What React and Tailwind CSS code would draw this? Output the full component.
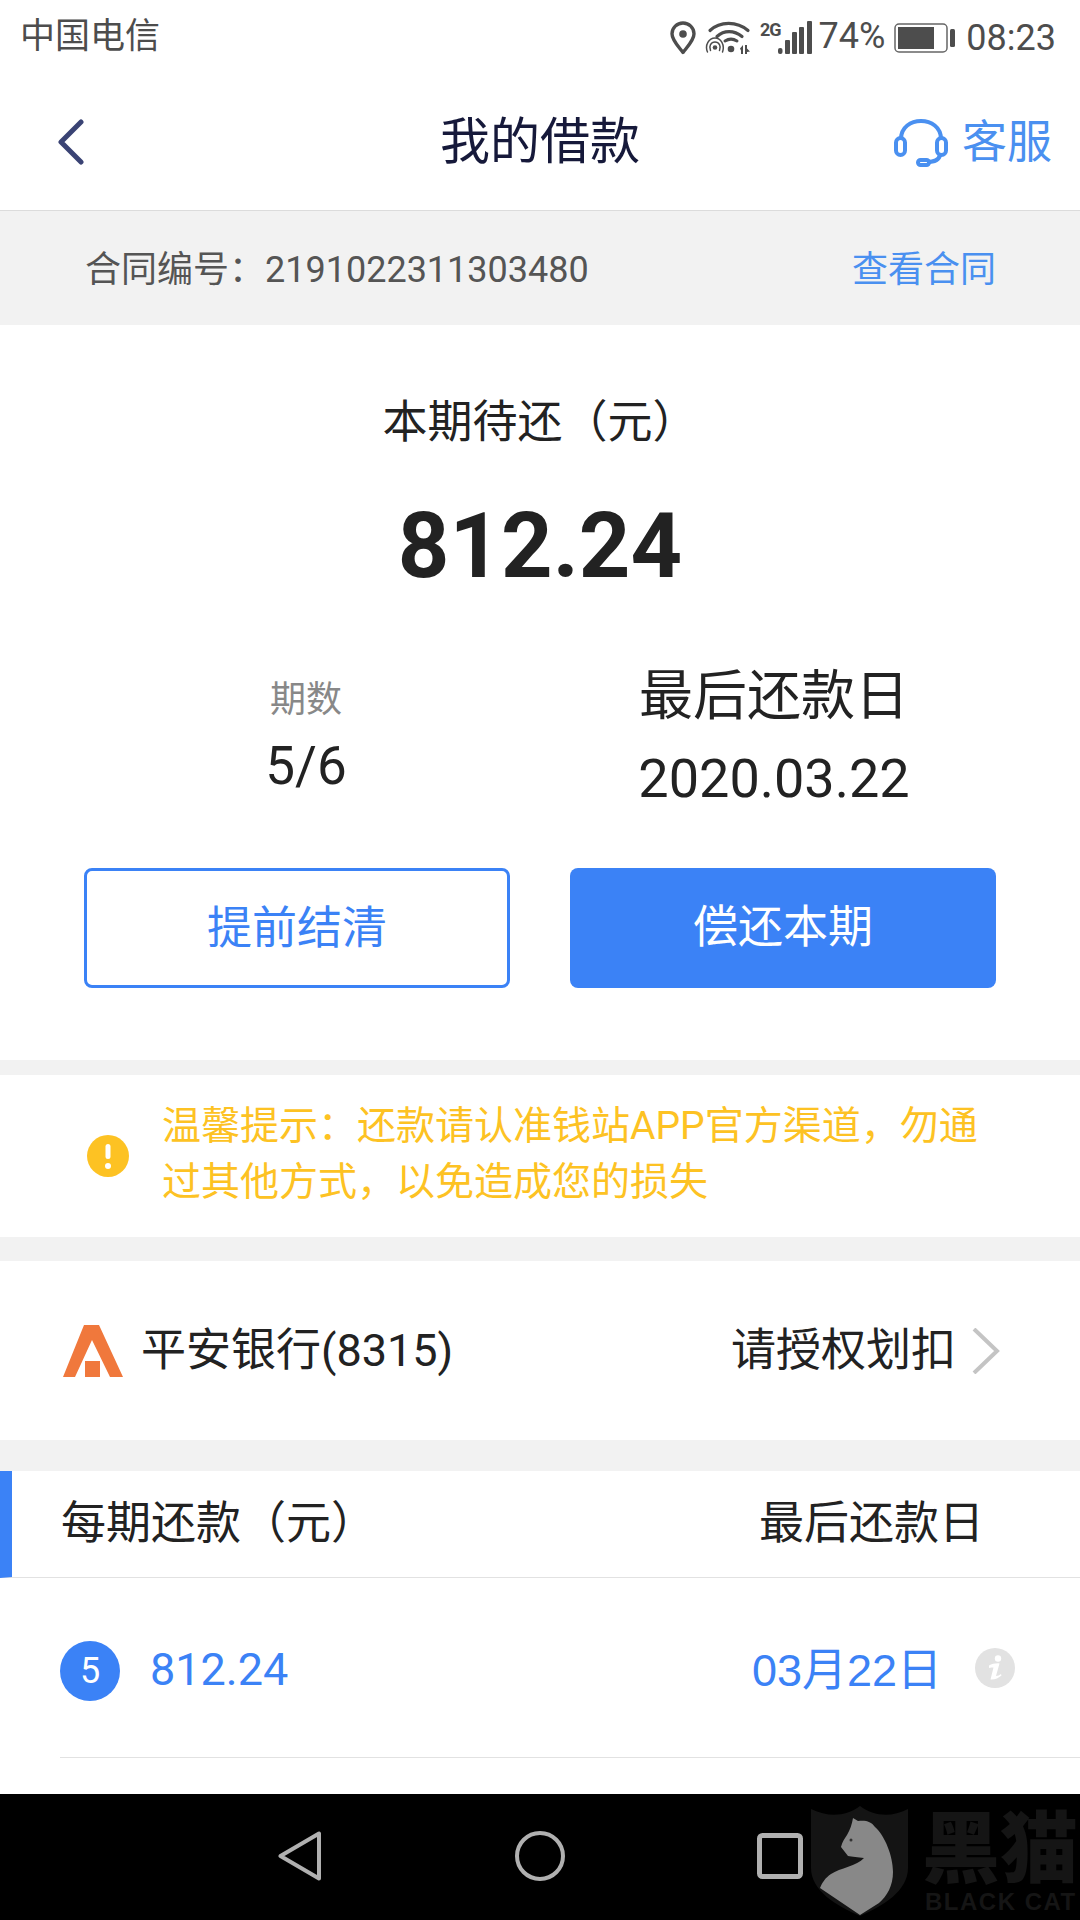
import React from "react"

const StatusIcons = () => (
  <>
    <svg width="26" height="34" viewBox="0 0 26 34">
      <path d="M13 2C7 2 2 6.800 2 12.800C2 19.500 9 26 13 31.500C17 26 24 19.500 24 12.800C24 6.800 19 2 13 2Z" fill="none" stroke="#4d4d4d" strokeWidth="3.400" strokeLinejoin="round" />
      <circle cx="13" cy="13" r="3.800" fill="#4d4d4d" />
    </svg>
    <svg width="46" height="34" viewBox="0 0 46 34" className="ml-[9px]">
      <g fill="none" stroke="#4d4d4d" strokeLinecap="round">
        <path d="M5 9.500C15 0 32 0 43 9.500" strokeWidth="3.200" />
        <path d="M12 15.500C19 9 29 9 37 15.500" strokeWidth="3.200" />
        <path d="M20 20C24 17.500 28 17.500 32 20" strokeWidth="3" />
        <path d="M2.500 31C-0.500 24 4 17 10 17C16 17 20 24 17.500 31" strokeWidth="1.500" />
        <path d="M5.500 29.500C3.500 25 6 21 10 21C14 21 16.500 25 14.500 29.500" strokeWidth="1.500" />
      </g>
      <circle cx="10" cy="26.500" r="2.300" fill="#4d4d4d" />
      <circle cx="26" cy="28" r="3.300" fill="#4d4d4d" />
      <path d="M35 27.500L38 24V33H36V29.500ZM40 24H42V27.500L45 30.500L42 31V33H40Z" fill="#4d4d4d" />
    </svg>
    <div className="ml-[9px] flex h-[34px] items-start">
      <span className="text-[18px] leading-[17px] font-bold tracking-[-1px] text-[#4d4d4d]">2G</span>
      <svg width="36" height="34" viewBox="0 0 36 34" className="ml-[-3px]">
        <g fill="#4d4d4d">
          <rect x="0" y="27" width="4.500" height="6" rx="2" />
          <rect x="7" y="19" width="5" height="14" rx="1" />
          <rect x="14" y="11" width="5" height="22" rx="1" />
          <rect x="21" y="6" width="5" height="27" rx="1" />
          <rect x="29" y="0" width="5" height="33" rx="1" />
        </g>
      </svg>
    </div>
    <span className="ml-[5px] mt-[-4px] text-[36px] leading-[40px]">74%</span>
    <svg width="62" height="30" viewBox="0 0 62 30" className="ml-[9px]">
      <rect x="1" y="1" width="52" height="28" rx="4" fill="none" stroke="#666666" strokeWidth="1.500" />
      <rect x="4" y="4" width="36" height="22" fill="#4d4d4d" />
      <rect x="56" y="6" width="5" height="18" rx="1.500" fill="#4d4d4d" />
    </svg>
  </>
)

const Headset = () => (
  <svg width="54" height="50" viewBox="0 0 54 50" fill="none" stroke="#4a90f0" strokeWidth="4">
    <path d="M7 21C7 -3 47 -3 47 21" />
    <rect x="2" y="20" width="9" height="17" rx="4.500" />
    <rect x="43" y="20" width="9" height="17" rx="4.500" />
    <path d="M46 37C45 42 40 44 33 44" />
    <rect x="24" y="42" width="11" height="5" rx="2.500" />
  </svg>
)

const BankLogo = () => (
  <svg width="60" height="52" viewBox="0 0 60 52">
    <path d="M21 0H36L60 52H47L29 15L12 52H0Z" fill="#f0783c" />
    <rect x="22" y="36" width="15" height="16" fill="#f0783c" />
  </svg>
)

const Watermark = () => (
  <div className="pointer-events-none absolute top-[12px] left-[811px] flex">
    <svg width="98" height="111" viewBox="0 0 98 111">
      <path d="M0 3C18 12 36 10 49 0C62 10 80 12 97 3V62C97 85 72 100 49 110C26 100 0 85 0 62Z" fill="#141414" />
      <path d="M42 12L47 15C54 14 60 15 64 21C74 30 82 50 82 66C82 80 76 90 68 97L49 109L9 82C11 77 14 72 20 68C29 62 46 60 53 52C47 51 41 51 37 50L30 41C31 36 34 32 36 29C39 24 41 18 42 12Z" fill="#888888" />
      <circle cx="40" cy="34" r="1.500" fill="#333333" />
    </svg>
    <div className="ml-[16px] flex w-[155px] flex-col">
      <span className="mt-[6px] ml-[-3px] text-[78px] leading-[78px] font-black whitespace-nowrap text-[#151515]">黑猫</span>
      <span className="font-['Liberation_Sans',sans-serif] text-[24px] leading-[24px] font-bold tracking-[1.500px] whitespace-nowrap text-[#151515]">BLACK CAT</span>
    </div>
  </div>
)

export default function App() {
  return (
    <div lang="zh-CN" className="flex h-[1920px] w-[1080px] flex-col overflow-hidden bg-[#f2f2f2] font-['Roboto','Noto_Sans_CJK_SC',sans-serif] text-[#222222]">
      {/* status bar */}
      <div className="flex h-[75px] items-center justify-between bg-white pr-[24px] pl-[20px] text-[#4d4d4d]">
        <span className="text-[35px]">中国电信</span>
        <div className="flex items-center">
          <StatusIcons />
          <span className="ml-[10px] text-[36px] leading-[40px]">08:23</span>
        </div>
      </div>

      {/* nav */}
      <div className="grid h-[136px] grid-cols-3 items-center border-b border-[#dcdcdc] bg-white px-[28px]">
        <svg width="28" height="46" viewBox="0 0 28 46" fill="none" stroke="#3a4374" strokeWidth="5" strokeLinecap="round" strokeLinejoin="round" className="ml-[29px] mt-[-2px]">
          <path d="M24 3L4 23L24 43" />
        </svg>
        <h1 className="text-center text-[50px] font-normal whitespace-nowrap text-[#16193a]">我的借款</h1>
        <div className="flex items-center justify-end gap-[14px] text-[45px] text-[#4a90f0]">
          <Headset />
          <span>客服</span>
        </div>
      </div>

      {/* contract */}
      <div className="flex h-[114px] items-center justify-between pt-[4px] pr-[84px] pl-[85px] text-[36px]">
        <span className="text-[#555555]">合同编号：2191022311303480</span>
        <span className="text-[#4a90f0]">查看合同</span>
      </div>

      {/* current period */}
      <div className="flex h-[735px] flex-col items-center bg-white pt-[68px]">
        <p className="text-[45px] leading-[60px]">本期待还（元）</p>
        <p className="mt-[44px] text-[90px] leading-[100px] font-bold">812.24</p>
        <div className="mt-[65px] grid w-[912px] grid-cols-2 gap-[24px] text-center">
          <div className="pt-[13px]">
            <p className="text-[36px] leading-[50px] text-[#888888]">期数</p>
            <p className="mt-[11px] text-[53px] leading-[60px]">5/6</p>
          </div>
          <div>
            <p className="text-[54px] leading-[70px]">最后还款日</p>
            <p className="mt-[12px] text-[54px] leading-[70px]">2020.03.22</p>
          </div>
        </div>
        <div className="mt-[54px] flex w-[912px] justify-between text-[45px]">
          <button className="h-[120px] w-[426px] rounded-[8px] border-[3px] border-[#3b82f6] pt-[2px] text-[#3b82f6]">提前结清</button>
          <button className="h-[120px] w-[426px] rounded-[8px] bg-[#3b82f6] text-white">偿还本期</button>
        </div>
      </div>

      {/* notice */}
      <div className="mt-[15px] flex h-[162px] items-center bg-white pl-[87px] text-[39px] leading-[56px] text-[#fdc223]">
        <svg width="42" height="42" viewBox="0 0 42 42" className="shrink-0">
          <circle cx="21" cy="21" r="21" fill="#fdc223" />
          <rect x="18.500" y="9" width="5" height="15" rx="2.500" fill="#ffffff" />
          <circle cx="21" cy="31" r="3" fill="#ffffff" />
        </svg>
        <p className="mt-[-4px] ml-[33px] w-[830px]">温馨提示：还款请认准钱站APP官方渠道，勿通过其他方式，以免造成您的损失</p>
      </div>

      {/* bank */}
      <div className="mt-[24px] flex h-[179px] items-center justify-between bg-white pr-[80px] pl-[63px] text-[45px]">
        <div className="flex items-center">
          <BankLogo />
          <span className="ml-[18px]">平安银行(8315)</span>
        </div>
        <div className="flex items-center">
          <span>请授权划扣</span>
          <svg width="28" height="46" viewBox="0 0 28 46" fill="none" stroke="#c4c4c4" strokeWidth="4" className="ml-[16px]">
            <path d="M2 1L25 23L2 45" />
          </svg>
        </div>
      </div>

      {/* plan */}
      <div className="mt-[31px] flex h-[107px] items-center justify-between border-b border-[#e2e2e2] border-l-[12px] border-l-[#3b82f6] bg-white pr-[96px] pl-[49px] text-[45px]">
        <span>每期还款（元）</span>
        <span>最后还款日</span>
      </div>
      <div className="flex-1 bg-white pl-[60px]">
        <div className="flex h-[180px] items-center justify-between border-b border-[#e2e2e2] pr-[65px] text-[#3b82f6]">
          <div className="mt-[6px] flex items-center text-[45px]">
            <span className="flex h-[60px] w-[60px] items-center justify-center rounded-full bg-[#3b82f6] text-[36px] text-white">5</span>
            <span className="mt-[-2px] ml-[30px]">812.24</span>
          </div>
          <div className="flex items-center text-[45px]">
            <span className="mt-[6px] font-['Liberation_Sans','Noto_Sans_CJK_SC',sans-serif]">03月22日</span>
            <svg width="40" height="40" viewBox="0 0 40 40" className="ml-[33px]">
              <circle cx="20" cy="20" r="20" fill="#e2e2e2" />
              <circle cx="23" cy="10.500" r="3.200" fill="#ffffff" />
              <path d="M14 17.500C17 16 21 15 24.500 15.500L21 28C23 28 24.500 27 26 26L26.500 27.500C23.500 30 19.500 32 15.500 31.500L18.500 19.500C17 19.500 15.500 19.500 14 20Z" fill="#ffffff" />
            </svg>
          </div>
        </div>
      </div>

      {/* android nav */}
      <div className="relative flex h-[126px] items-center bg-black pb-[2px] pl-[278px]">
        <svg width="44" height="50" viewBox="0 0 44 50" fill="none" stroke="#b0b0b0" strokeWidth="4" strokeLinejoin="round">
          <path d="M41 2.500V47.500L2.500 25Z" />
        </svg>
        <svg width="50" height="50" viewBox="0 0 50 50" fill="none" stroke="#b0b0b0" strokeWidth="4" className="ml-[193px]">
          <circle cx="25" cy="25" r="23" />
        </svg>
        <svg width="46" height="46" viewBox="0 0 46 46" fill="none" stroke="#b0b0b0" strokeWidth="5" className="ml-[192px]">
          <rect x="2.500" y="2.500" width="41" height="41" rx="3" />
        </svg>
        <Watermark />
      </div>
    </div>
  )
}
